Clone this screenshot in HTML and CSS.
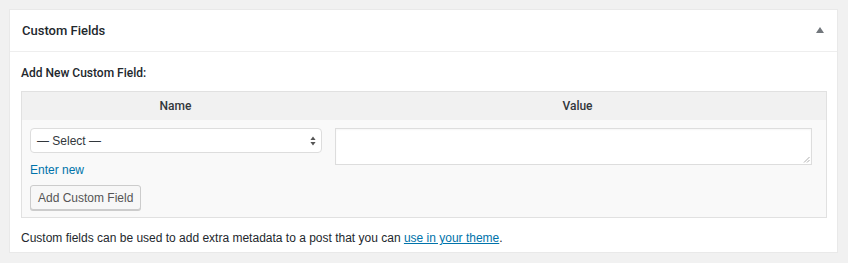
FILE: index.html
```html
<!DOCTYPE html>
<html>
<head>
<meta charset="utf-8">
<link rel="stylesheet" href="styles.css">
</head>
<body>
<div class="postbox">
  <div class="postbox-header">
    <h2 class="hndle">Custom Fields</h2>
    <span class="toggle-indicator"></span>
  </div>
  <div class="inside">
    <p class="add-title">Add New Custom Field:</p>
    <div class="meta-table">
      <div class="meta-head">
        <div class="col-name">Name</div>
        <div class="col-value">Value</div>
      </div>
      <div class="meta-body">
        <div class="col-name cell-left">
          <div class="select">
            <span>— Select —</span>
            <svg class="arrows" width="6" height="10" viewBox="0 0 6 10"><path d="M3 0.5 L5.6 4 L0.4 4 Z M3 9.5 L5.6 6 L0.4 6 Z" fill="#555"/></svg>
          </div>
          <a class="enter-new" href="#">Enter new</a>
          <button class="button">Add Custom Field</button>
        </div>
        <div class="col-value cell-right">
          <div class="textarea">
            <svg class="grip" width="7" height="7" viewBox="0 0 7 7"><path d="M6.5 1 L1 6.5 M6.5 4 L4 6.5" stroke="#999" stroke-width="0.8"/></svg>
          </div>
        </div>
      </div>
    </div>
    <p class="note">Custom fields can be used to add extra metadata to a post that you can <a href="#">use in your theme</a>.</p>
  </div>
</div>
</body>
</html>
```
FILE: styles.css
```css
html, body {
  margin: 0;
  padding: 0;
}
body {
  background: #f1f1f1;
  padding: 9px 10px 10px 9px;
  font-family: "Liberation Sans", Arial, sans-serif;
  font-size: 12px;
  color: #23282d;
}
.postbox {
  background: #fff;
  border: 1px solid #e9e9e9;
  height: 244px;
  box-sizing: border-box;
}
.postbox-header {
  height: 41px;
  border-bottom: 1px solid #eee;
  display: flex;
  align-items: center;
  justify-content: space-between;
  padding: 0 13px 0 12px;
}
.hndle {
  margin: 0;
  font-family: Roboto, "Liberation Sans", sans-serif;
  font-size: 13px;
  font-weight: 500;
  color: #23282d;
}
.toggle-indicator {
  width: 0;
  height: 0;
  border-left: 4px solid transparent;
  border-right: 4px solid transparent;
  border-bottom: 6px solid #72777c;
  margin-top: -2px;
}
.inside {
  padding: 0 10px 0 11px;
}
.add-title {
  margin: 0;
  padding-top: 14px;
  height: 25px;
  font-family: Roboto, "Liberation Sans", sans-serif;
  font-weight: 500;
  font-size: 12px;
}
.meta-table {
  border: 1px solid #e1e1e1;
  background: #f9f9f9;
  height: 127px;
  box-sizing: border-box;
}
.meta-head {
  display: flex;
  background: #f1f1f1;
  height: 28px;
  align-items: center;
  font-family: Roboto, "Liberation Sans", sans-serif;
  font-weight: 500;
  color: #32373c;
}
.col-name {
  width: 307px;
  text-align: center;
}
.col-value {
  flex: 1;
  text-align: center;
}
.meta-body {
  display: flex;
}
.cell-left {
  text-align: left;
  padding: 8px 0 0 8px;
  box-sizing: border-box;
  display: flex;
  flex-direction: column;
  align-items: flex-start;
}
.select {
  width: 292px;
  height: 25px;
  box-sizing: border-box;
  border: 1px solid #ddd;
  border-radius: 4px;
  background: #fff;
  display: flex;
  align-items: center;
  justify-content: space-between;
  padding: 0 5px 0 6px;
  color: #32373c;
  font-size: 12px;
}
.arrows {
  display: block;
}
.enter-new {
  color: #0073aa;
  text-decoration: none;
  margin-top: 9px;
  line-height: 16px;
}
.button {
  margin-top: 7px;
  height: 25px;
  padding: 0 7px;
  font-family: inherit;
  font-size: 12px;
  white-space: nowrap;
  color: #555;
  background: #f7f7f7;
  border: 1px solid #ccc;
  border-radius: 3px;
  box-shadow: 0 1px 0 #ccc;
}
.cell-right {
  padding: 8px 14px 0 6px;
}
.textarea {
  height: 37px;
  background: #fff;
  border: 1px solid #ddd;
  box-sizing: border-box;
  position: relative;
  box-shadow: inset 0 1px 2px rgba(0,0,0,.04);
}
.grip {
  position: absolute;
  right: 1px;
  bottom: 1px;
}
.note {
  margin: 0;
  padding-top: 12px;
  line-height: 16px;
}
.note a {
  color: #0073aa;
  text-decoration: underline;
}
```
